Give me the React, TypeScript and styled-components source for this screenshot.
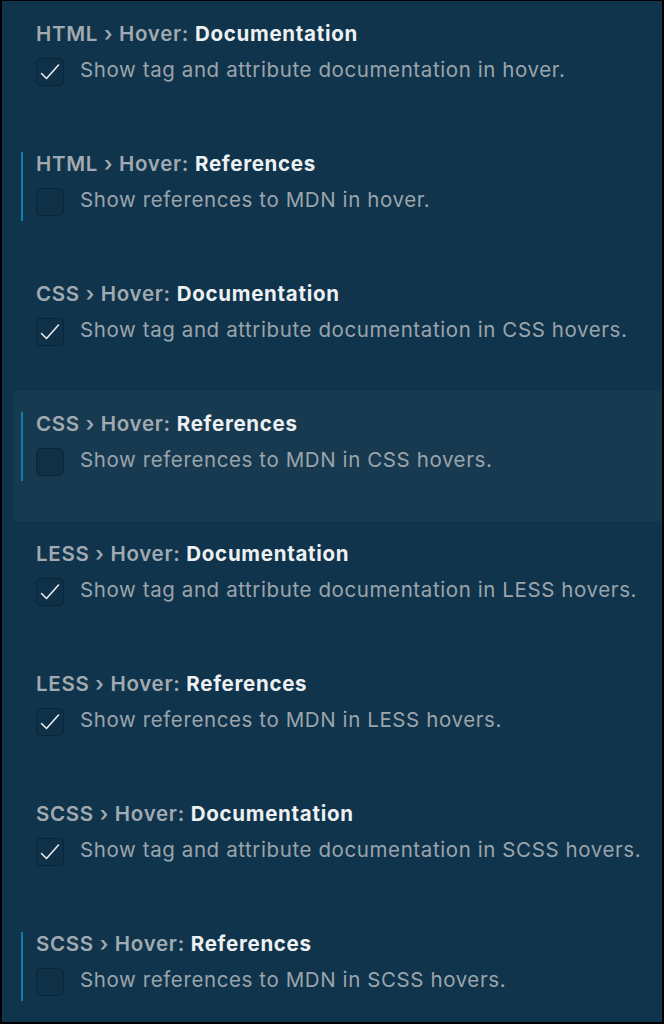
import { FC } from 'react';
import styled, { createGlobalStyle } from 'styled-components';

interface ISetting {
	lang: string;
	name: string;
	text: string;
	checked: boolean;
	modified: boolean;
	hovered?: boolean;
}

const settings: ISetting[] = [
	{ lang: 'HTML', name: 'Documentation', text: 'Show tag and attribute documentation in hover.', checked: true, modified: false },
	{ lang: 'HTML', name: 'References', text: 'Show references to MDN in hover.', checked: false, modified: true },
	{ lang: 'CSS', name: 'Documentation', text: 'Show tag and attribute documentation in CSS hovers.', checked: true, modified: false },
	{ lang: 'CSS', name: 'References', text: 'Show references to MDN in CSS hovers.', checked: false, modified: true, hovered: true },
	{ lang: 'LESS', name: 'Documentation', text: 'Show tag and attribute documentation in LESS hovers.', checked: true, modified: false },
	{ lang: 'LESS', name: 'References', text: 'Show references to MDN in LESS hovers.', checked: true, modified: false },
	{ lang: 'SCSS', name: 'Documentation', text: 'Show tag and attribute documentation in SCSS hovers.', checked: true, modified: false },
	{ lang: 'SCSS', name: 'References', text: 'Show references to MDN in SCSS hovers.', checked: false, modified: true },
];

const CheckIcon: FC = () => (
	<svg width="28" height="28" viewBox="0 0 28 28" fill="none">
		<path d="M5.5 15.5 L10.5 20.5 L22.5 7" stroke="#e6eaee" strokeWidth="1.6" strokeLinecap="round" strokeLinejoin="round" />
	</svg>
);

const App: FC = () => (
	<>
		<GlobalStyle />
		<Panel>
			{settings.map((s, i) => (
				<Row key={i} $hovered={!!s.hovered}>
					<Setting $modified={s.modified}>
						<Title>
							<Category>{s.lang} › Hover: </Category>
							<Name>{s.name}</Name>
						</Title>
						<CheckLine>
							<Box>{s.checked && <CheckIcon />}</Box>
							<Description>{s.text}</Description>
						</CheckLine>
					</Setting>
				</Row>
			))}
		</Panel>
	</>
);

export default App;

const GlobalStyle = createGlobalStyle`
	body {
		margin: 0;
		background: #10344b;
		font-family: Inter, "Noto Sans", sans-serif;
	}
`

const Panel = styled.div`
	width: 664px;
	height: 1024px;
	box-sizing: border-box;
	background: #10344b;
	border-style: solid;
	border-color: #000;
	border-width: 1px 2px 2px 2px;
	overflow: hidden;
`

const Row = styled.div<{ $hovered: boolean }>`
	height: 130px;
	box-sizing: border-box;
	margin-left: 11px;
	padding: 21px 0 0 8px;
	background: ${p => (p.$hovered ? '#183a50' : 'transparent')};
`

const Setting = styled.div<{ $modified: boolean }>`
	display: flex;
	flex-direction: column;
	gap: 13px;
	padding: 1px 0 5px 13px;
	border-left: 2px solid ${p => (p.$modified ? '#0f7fa8' : 'transparent')};
`

const Title = styled.div`
	font-size: 20.5px;
	line-height: 22px;
	font-weight: 600;
	letter-spacing: 0.7px;
	white-space: nowrap;
`

const Category = styled.span`
	color: #a1aab1;
`

const Name = styled.span`
	color: #eef1f3;
	font-weight: 700;
`

const CheckLine = styled.div`
	display: flex;
	align-items: center;
	gap: 16px;
`

const Box = styled.div`
	position: relative;
	width: 28px;
	height: 28px;
	box-sizing: border-box;
	border: 1.5px solid #0a2538;
	border-radius: 5px;
	background: #0f3148;
	flex-shrink: 0;

	svg {
		position: absolute;
		left: -1.5px;
		top: -1.5px;
	}
`

const Description = styled.span`
	font-size: 20.5px;
	line-height: 24px;
	letter-spacing: 0.6px;
	padding-bottom: 4px;
	color: #9ba4ab;
	white-space: nowrap;
`
